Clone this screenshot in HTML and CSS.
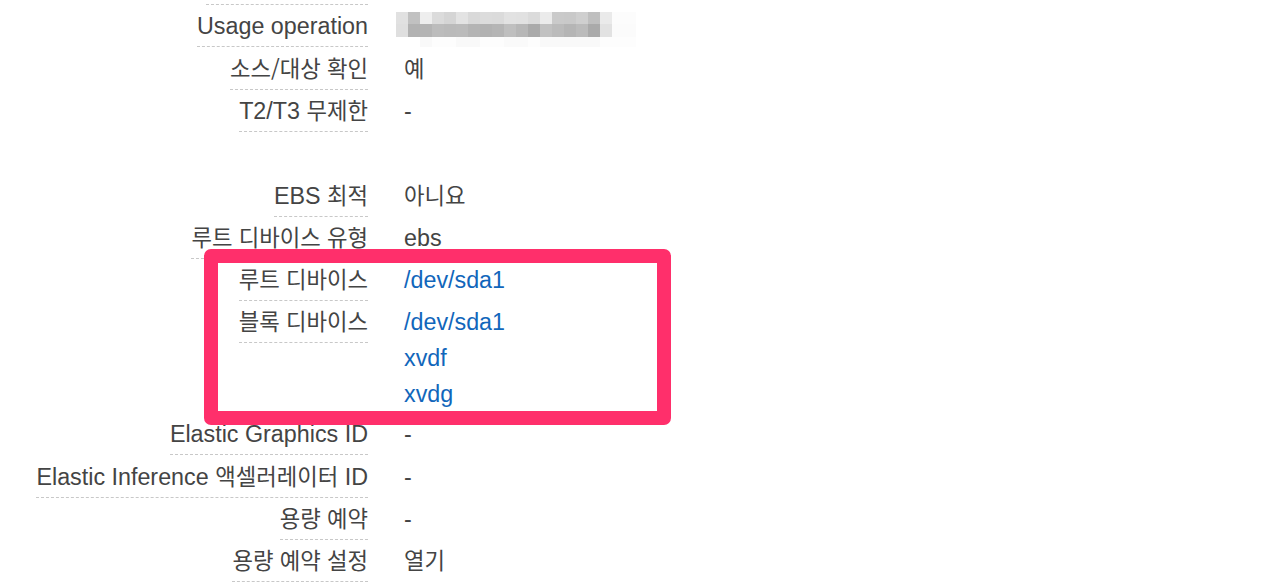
FILE: index.html
```html
<!DOCTYPE html>
<html lang="ko">
<head>
<meta charset="utf-8">
<title>인스턴스 세부 정보</title>
<link rel="stylesheet" href="styles.css">
</head>
<body>
<div class="details">
  <div class="row">
    <div class="label"><span class="lbl lbl-prev"></span></div>
    <div class="value"></div>
  </div>
  <div class="row">
    <div class="label"><span class="lbl">Usage operation</span></div>
    <div class="value"><div class="blur"><div class="blur-a"></div><div class="blur-b"></div><div class="blur-c"></div></div></div>
  </div>
  <div class="row">
    <div class="label"><span class="lbl"><span class="ko">소스/대상 확인</span></span></div>
    <div class="value"><span class="ko">예</span></div>
  </div>
  <div class="row">
    <div class="label"><span class="lbl">T2/T3 <span class="ko">무제한</span></span></div>
    <div class="value">-</div>
  </div>
  <div class="row">
    <div class="label"></div>
    <div class="value"></div>
  </div>
  <div class="row">
    <div class="label"><span class="lbl">EBS <span class="ko">최적</span></span></div>
    <div class="value"><span class="ko">아니요</span></div>
  </div>
  <div class="row">
    <div class="label"><span class="lbl"><span class="ko">루트 디바이스 유형</span></span></div>
    <div class="value">ebs</div>
  </div>
  <div class="row">
    <div class="label"><span class="lbl"><span class="ko">루트 디바이스</span></span></div>
    <div class="value"><a class="link" href="#">/dev/sda1</a></div>
  </div>
  <div class="row">
    <div class="label"><span class="lbl"><span class="ko">블록 디바이스</span></span></div>
    <div class="value">
      <div><a class="link" href="#">/dev/sda1</a></div>
      <div><a class="link" href="#">xvdf</a></div>
      <div><a class="link" href="#">xvdg</a></div>
    </div>
  </div>
  <div class="row">
    <div class="label"><span class="lbl">Elastic Graphics ID</span></div>
    <div class="value">-</div>
  </div>
  <div class="row">
    <div class="label"><span class="lbl">Elastic Inference <span class="ko">액셀러레이터</span> ID</span></div>
    <div class="value">-</div>
  </div>
  <div class="row">
    <div class="label"><span class="lbl"><span class="ko">용량 예약</span></span></div>
    <div class="value">-</div>
  </div>
  <div class="row">
    <div class="label"><span class="lbl"><span class="ko">용량 예약 설정</span></span></div>
    <div class="value"><span class="ko">열기</span></div>
  </div>
</div>
<div class="highlight"></div>
</body>
</html>
```

FILE: styles.css
```css
html, body {
  margin: 0;
  padding: 0;
  background: #ffffff;
  overflow: hidden;
}

body {
  font-family: "Liberation Sans", "Noto Sans CJK KR", sans-serif;
  font-size: 23.3px;
  color: #444444;
}

.ko {
  font-family: "Noto Sans CJK KR", sans-serif;
  font-size: 22.3px;
  line-height: 1;
}

.details {
  margin-top: -34.3px;
}

.row {
  display: flex;
  align-items: flex-start;
  min-height: 42.3px;
}

.label {
  flex: none;
  width: 368px;
  padding-top: 3px;
  line-height: 30px;
  text-align: right;
}

.lbl {
  display: inline-block;
  line-height: 30px;
  padding-bottom: 5px;
  border-bottom: 1px dashed #c8c8c8;
  vertical-align: top;
}

.lbl-prev {
  width: 162px;
  height: 30px;
}

.value {
  margin-left: 36px;
  line-height: 36px;
  padding-bottom: 4px;
  color: #444444;
}

.link {
  color: #1166bb;
  text-decoration: none;
}

.blur {
  width: 240px;
  margin: 3.7px 0 0 -8px;
}

.blur-a,
.blur-b,
.blur-c {
  height: 12.5px;
}

.blur-a {
  background: linear-gradient(90deg,
    #e1e1e1 0 12px, #c1c1c1 12px 24px, #eeeeee 24px 36px, #dbdbdb 36px 48px,
    #d5d5d5 48px 60px, #e3e3e3 60px 72px, #d9d9d9 72px 84px, #dcdcdc 84px 96px,
    #dbdbdb 96px 108px, #e2e2e2 108px 120px, #e1e1e1 120px 132px, #dbdbdb 132px 144px,
    #ebebeb 144px 156px, #cacaca 156px 168px, #c9c9c9 168px 180px, #cfcfcf 180px 192px,
    #bfbfbf 192px 204px, #eaeaea 204px 216px, #fcfcfc 216px 240px);
}

.blur-b {
  background: linear-gradient(90deg,
    #dfdfdf 0 12px, #b2b2b2 12px 24px, #b4b4b4 24px 36px, #bcbcbc 36px 48px,
    #bababa 48px 60px, #bbbbbb 60px 72px, #b4b4b4 72px 84px, #b2b2b2 84px 96px,
    #b5b5b5 96px 108px, #bfbfbf 108px 120px, #b7b7b7 120px 132px, #aaaaaa 132px 144px,
    #c1c1c1 144px 156px, #bbbbbb 156px 168px, #b5b5b5 168px 180px, #bbbbbb 180px 192px,
    #aaaaaa 192px 204px, #e2e2e2 204px 216px, #fbfbfb 216px 240px);
}

.blur-c {
  height: 10px;
  background: linear-gradient(90deg,
    #ffffff 0 24px, #f9f9f9 24px 36px, #fdfdfd 36px 60px, #f9f9f9 60px 84px,
    #fdfdfd 84px 108px, #fafafa 108px 132px, #fdfdfd 132px 144px, #f9f9f9 144px 204px,
    #fdfdfd 204px 240px);
}

.highlight {
  position: absolute;
  left: 204px;
  top: 249px;
  width: 467px;
  height: 176px;
  box-sizing: border-box;
  border: 14px solid #ff2f6b;
  border-radius: 7px;
}
```
